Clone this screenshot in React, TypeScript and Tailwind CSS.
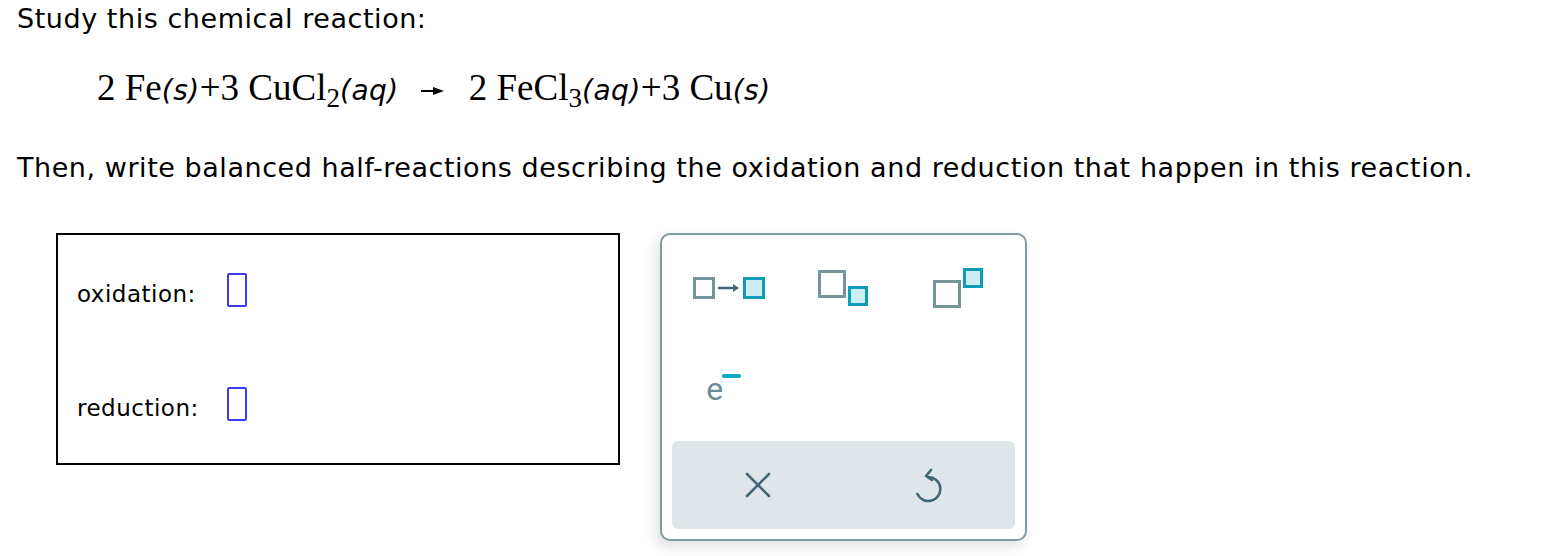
const sans = "font-['DejaVu_Sans',Verdana,sans-serif]"
const serif = "font-['Liberation_Serif','Times_New_Roman',serif]"

const Phase = ({ children }: { children: string }) => (
  <span className={`${sans} italic text-[28px] tracking-[0.5px]`}>({children})</span>
)

const Equation = () => (
  <div className={`${serif} text-[37px] leading-[40px] text-black flex items-baseline whitespace-pre`}>
    <span>2 Fe</span>
    <Phase>s</Phase>
    <span>+3 CuCl</span>
    <sub className="text-[27px] relative top-[7px] align-baseline">2</sub>
    <Phase>aq</Phase>
    <svg width="23" height="10" viewBox="0 0 23 10" className="ml-[22px] mr-[25px] self-center mt-[2px]">
      <path d="M0 5h15" stroke="#000" strokeWidth="2" />
      <path d="M12 1l11 4-11 4z" fill="#000" />
    </svg>
    <span>2 FeCl</span>
    <sub className="text-[27px] relative top-[7px] align-baseline">3</sub>
    <Phase>aq</Phase>
    <span>+3 Cu</span>
    <Phase>s</Phase>
  </div>
)

const Slot = () => <div className="w-[20px] h-[34px] mb-[8px] border-2 border-[#3b3bf5] rounded-[2px]" />

const gray = 'border-[3px] border-[#77939a] bg-white'
const cyan = 'border-[3px] border-[#0b9eb6] bg-[#cdedf2]'

const ArrowIcon = () => (
  <div className="flex items-center gap-[2px]">
    <div className={`w-[22px] h-[22px] ${gray}`} />
    <svg width="24" height="10" viewBox="0 0 24 10">
      <path d="M1 5h16" stroke="#3f6774" strokeWidth="2.5" />
      <path d="M16 1l6 4-6 4z" fill="#3f6774" />
    </svg>
    <div className={`w-[22px] h-[22px] ${cyan}`} />
  </div>
)

const SubIcon = () => (
  <div className="flex items-start gap-[2px]">
    <div className={`w-[28px] h-[28px] ${gray}`} />
    <div className={`w-[20px] h-[20px] mt-[16px] ${cyan}`} />
  </div>
)

const SupIcon = () => (
  <div className="flex items-start gap-[2px]">
    <div className={`w-[28px] h-[28px] mt-[12px] ${gray}`} />
    <div className={`w-[20px] h-[20px] ${cyan}`} />
  </div>
)

const Electron = () => (
  <div className="relative w-[36px] h-[36px] flex items-end mr-[12px] mt-[6px]">
    <span className="font-['Roboto',sans-serif] text-[32px] leading-none text-[#6b8c94] mb-[1px] ml-[1px]">e</span>
    <div className="absolute right-[0px] top-[4px] w-[19px] h-[4px] rounded-full bg-[#0aaac8]" />
  </div>
)

const Row = ({ label }: { label: string }) => (
  <div className="flex items-center text-[23px] tracking-[0.5px]">
    <span className="w-[150px]">{label}</span>
    <Slot />
  </div>
)

export default function App() {
  return (
    <div className={`${sans} text-black bg-white w-[1542px] h-[556px] overflow-hidden pl-[17px]`}>
      <div className="text-[27px] leading-[36px] tracking-[0.55px] pt-[1px]">Study this chemical reaction:</div>

      <div className="pl-[80px] mt-[31px]">
        <Equation />
      </div>

      <div className="text-[27px] leading-[36px] tracking-[0.55px] mt-[39px]">
        Then, write balanced half-reactions describing the oxidation and reduction that happen in this reaction.
      </div>

      <div className="flex items-start mt-[47px] ml-[39px] gap-[40px]">
        <div className="w-[564px] h-[232px] border-2 border-black flex flex-col justify-center gap-[72px] pl-[19px] pt-[4px]">
          <Row label="oxidation:" />
          <Row label="reduction:" />
        </div>

        <div className="w-[367px] h-[308px] border-2 border-[#7f9aa1] rounded-[10px] bg-white shadow-[-4px_6px_14px_rgba(0,0,0,0.12)] flex flex-col pt-[4px] px-[10px] pb-[10px]">
          <div className="grid grid-cols-3 h-[97px] items-center justify-items-center">
            <ArrowIcon />
            <SubIcon />
            <SupIcon />
          </div>
          <div className="grid grid-cols-3 h-[97px] items-center justify-items-center">
            <Electron />
          </div>
          <div className="mt-[8px] h-[88px] rounded-[6px] bg-[#dfe6e9] grid grid-cols-2 items-center justify-items-center">
            <svg width="26" height="26" viewBox="0 0 26 26" fill="none" stroke="#3f6774" strokeWidth="2.6" strokeLinecap="round">
              <path d="M2 2l22 22M24 2L2 24" />
            </svg>
            <svg width="28" height="36" viewBox="0 0 28 36" fill="none" stroke="#3f6774" strokeWidth="2.6" strokeLinecap="round" strokeLinejoin="round">
              <path d="M13 10a12 12 0 1 1-10.6 17" />
              <path d="M16 3l-5 6 6 4" />
            </svg>
          </div>
        </div>
      </div>
    </div>
  )
}
